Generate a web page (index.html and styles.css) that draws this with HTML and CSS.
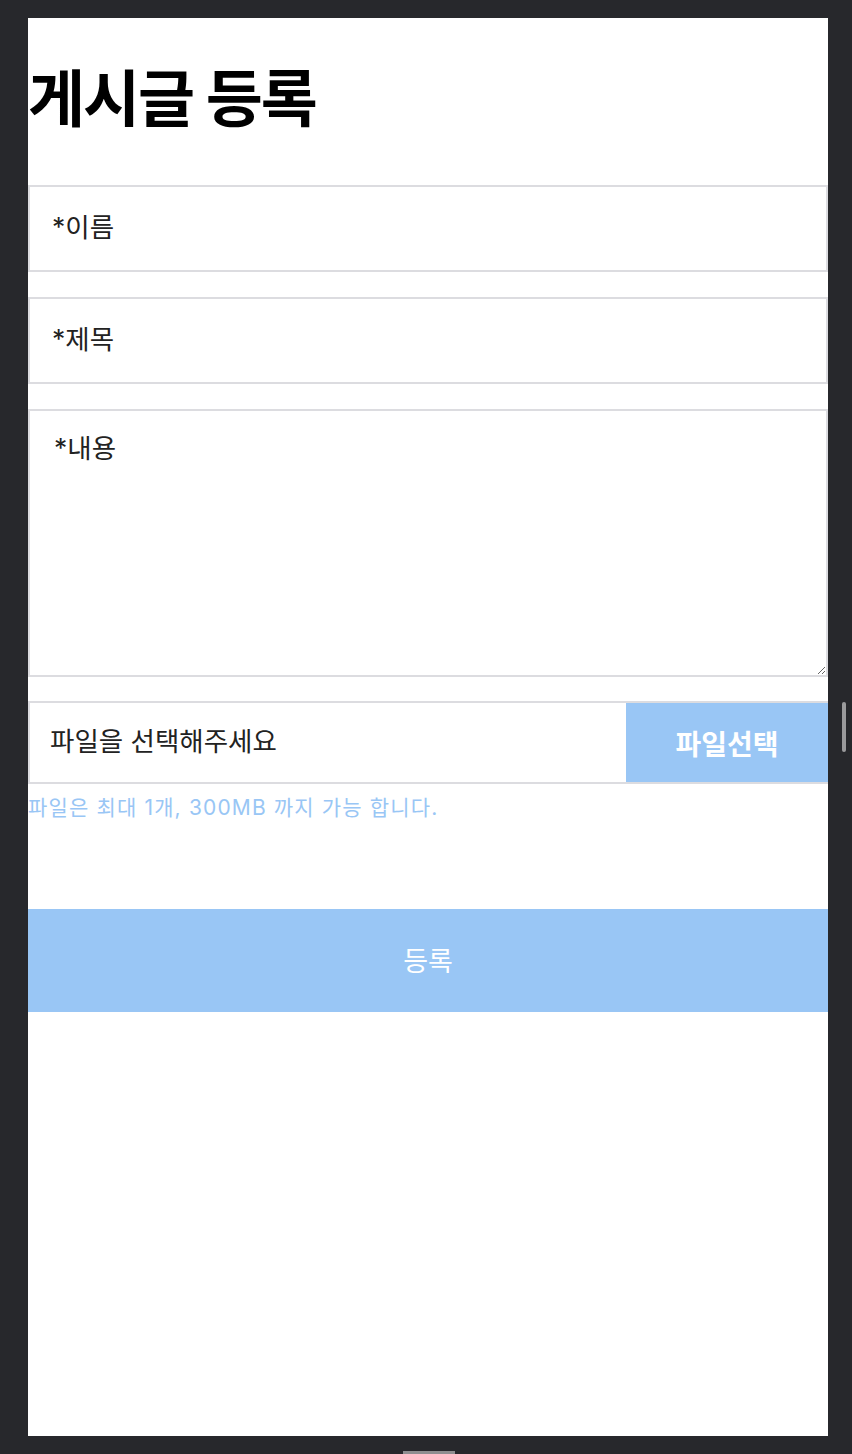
FILE: index.html
```html
<!DOCTYPE html>
<html lang="ko">
<head>
    <meta charset="UTF-8">
    <meta name="viewport" content="width=device-width, initial-scale=1.0">
    <title>게시글 등록</title>
    <link rel="stylesheet" href="styles.css">
</head>
<body>
    <div class="page">
        <h1>게시글 등록</h1>
        <form class="post-form">
            <input type="text" class="field" placeholder="*이름">
            <input type="text" class="field" placeholder="*제목">
            <textarea class="field content" placeholder="*내용"></textarea>
            <div class="file-row">
                <input type="text" class="field file-name" placeholder="파일을 선택해주세요" readonly>
                <button type="button" class="file-button">파일선택</button>
            </div>
            <p class="file-note">파일은 최대 1개, 300MB 까지 가능 합니다.</p>
            <button type="button" class="submit-button">등록</button>
        </form>
    </div>
    <div class="scroll-handle"></div>
    <div class="bottom-tab"></div>
</body>
</html>
```

FILE: styles.css
```css
body {
    margin: 0;
    background-color: #27282c;
    font-family: Inter, "Noto Sans CJK KR", sans-serif;
}
.page {
    width: 800px;
    height: 1418px;
    margin: 18px 0 0 28px;
    background-color: #fff;
    overflow: hidden;
}
h1 {
    margin: 45px 0 0 0;
    font-size: 62px;
    line-height: 74px;
    font-weight: 700;
    color: #000;
    letter-spacing: -2px;
}
.post-form {
    display: flex;
    flex-direction: column;
    margin-top: 48px;
}
.field {
    box-sizing: border-box;
    width: 100%;
    height: 87px;
    margin: 0 0 25px 0;
    padding: 0 22px 4px 22px;
    border: 2px solid #dcdce0;
    font-family: inherit;
    font-size: 26.5px;
    color: #222;
    outline: none;
    background: #fff;
}
.field::placeholder {
    color: #222;
}
.content {
    height: 268px;
    padding: 16px 24px;
    resize: vertical;
    margin-bottom: 24px;
}
.file-row {
    display: flex;
    height: 83px;
}
.file-row .file-name {
    flex: 1;
    height: 83px;
    margin: 0;
    border-right: none;
    padding-left: 20px;
}
.file-button {
    width: 202px;
    border: none;
    border-top: 2px solid #dcdce0;
    border-bottom: 2px solid #dcdce0;
    background-color: #99c6f5;
    color: #fff;
    font-family: inherit;
    font-size: 28px;
    font-weight: 700;
    padding-top: 2px;
}
.file-note {
    margin: 9px 0 0 0;
    font-size: 21px;
    line-height: 30px;
    letter-spacing: 1.15px;
    color: #99c6f5;
}
.submit-button {
    height: 103px;
    margin-top: 86px;
    border: none;
    background-color: #99c6f5;
    color: #fff;
    font-family: inherit;
    font-size: 27px;
    padding-bottom: 4px;
}
.scroll-handle {
    position: absolute;
    left: 842px;
    top: 702px;
    width: 4px;
    height: 50px;
    border-radius: 2px;
    background-color: #9a9a9c;
}
.bottom-tab {
    position: absolute;
    left: 403px;
    top: 1451px;
    width: 52px;
    height: 3px;
    background-color: #8e8e90;
}
```
